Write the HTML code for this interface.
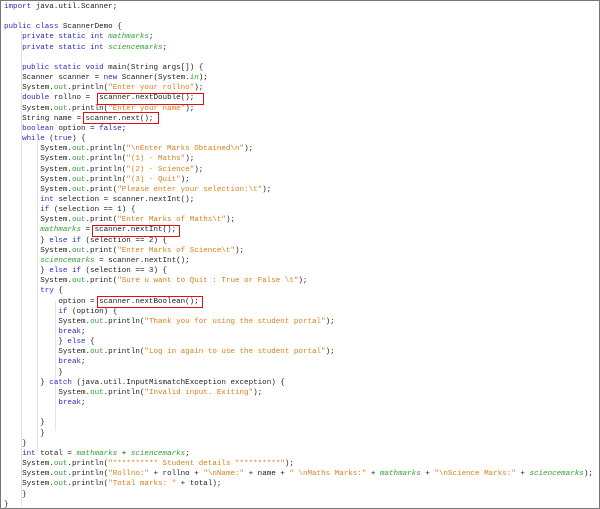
<!DOCTYPE html>
<html><head><meta charset="utf-8"><style>
html,body{margin:0;padding:0;background:#fff;}
#f{position:absolute;left:0;top:0;width:598px;height:507px;border:1px solid #777;background:#fff;overflow:hidden;}
.l{position:absolute;left:0;white-space:pre;font-family:"Liberation Mono",monospace;font-size:7.56px;line-height:10.15px;color:#222;}
.k{color:#2b2bc0}.s{color:#d8801c}.g{color:#2e9e2e}.i{color:#2e9e2e;font-style:italic}
.b{position:absolute;border:1.5px solid #e01010;box-sizing:border-box;}
.v{position:absolute;width:1px;background:#e4e4e4;}
</style></head><body><div id="f">
<div class="v" style="left:20px;top:30px;height:475px"></div>
<div class="v" style="left:36px;top:140px;height:310px"></div>
<div class="v" style="left:54px;top:300px;height:130px"></div>
<pre class="l" style="top:1px;left:3px;margin:0">
<span class="k">import</span> java.util.Scanner;

<span class="k">public class</span> ScannerDemo {
    <span class="k">private static int</span> <span class="i">mathmarks</span>;
    <span class="k">private static int</span> <span class="i">sciencemarks</span>;

    <span class="k">public static void</span> main(String args[]) {
    Scanner scanner = <span class="k">new</span> Scanner(System.<span class="i">in</span>);
    System.<span class="g">out</span>.println(<span class="s">"Enter your rollno"</span>);
    <span class="k">double</span> rollno =  scanner.nextDouble();
    System.<span class="g">out</span>.println(<span class="s">"Enter your name"</span>);
    String name = scanner.next();
    <span class="k">boolean</span> option = <span class="k">false</span>;
    <span class="k">while</span> (<span class="k">true</span>) {
        System.<span class="g">out</span>.println(<span class="s">"\nEnter Marks Obtained\n"</span>);
        System.<span class="g">out</span>.println(<span class="s">"(1) - Maths"</span>);
        System.<span class="g">out</span>.println(<span class="s">"(2) - Science"</span>);
        System.<span class="g">out</span>.println(<span class="s">"(3) - Quit"</span>);
        System.<span class="g">out</span>.print(<span class="s">"Please enter your selection:\t"</span>);
        <span class="k">int</span> selection = scanner.nextInt();
        <span class="k">if</span> (selection == 1) {
        System.<span class="g">out</span>.print(<span class="s">"Enter Marks of Maths\t"</span>);
        <span class="i">mathmarks</span> = scanner.nextInt();
        } <span class="k">else if</span> (selection == 2) {
        System.<span class="g">out</span>.print(<span class="s">"Enter Marks of Science\t"</span>);
        <span class="i">sciencemarks</span> = scanner.nextInt();
        } <span class="k">else if</span> (selection == 3) {
        System.<span class="g">out</span>.print(<span class="s">"Sure u want to Quit : True or False \t"</span>);
        <span class="k">try</span> {
            option = scanner.nextBoolean();
            <span class="k">if</span> (option) {
            System.<span class="g">out</span>.println(<span class="s">"Thank you for using the student portal"</span>);
            <span class="k">break</span>;
            } <span class="k">else</span> {
            System.<span class="g">out</span>.println(<span class="s">"Log in again to use the student portal"</span>);
            <span class="k">break</span>;
            }
        } <span class="k">catch</span> (java.util.InputMismatchException exception) {
            System.<span class="g">out</span>.println(<span class="s">"Invalid input. Exiting"</span>);
            <span class="k">break</span>;

        }
        }
    }
    <span class="k">int</span> total = <span class="i">mathmarks</span> + <span class="i">sciencemarks</span>;
    System.<span class="g">out</span>.println(<span class="s">"********** Student details **********"</span>);
    System.<span class="g">out</span>.println(<span class="s">"Rollno:"</span> + rollno + <span class="s">"\nName:"</span> + name + <span class="s">" \nMaths Marks:"</span> + <span class="i">mathmarks</span> + <span class="s">"\nScience Marks:"</span> + <span class="i">sciencemarks</span>);
    System.<span class="g">out</span>.println(<span class="s">"Total marks: "</span> + total);
    }
}</pre>
<div class="b" style="left:96px;top:92px;width:107px;height:12px"></div>
<div class="b" style="left:82px;top:111px;width:76px;height:12px"></div>
<div class="b" style="left:91px;top:224px;width:88px;height:12px"></div>
<div class="b" style="left:96px;top:295px;width:106px;height:12px"></div>
</div></body></html>
